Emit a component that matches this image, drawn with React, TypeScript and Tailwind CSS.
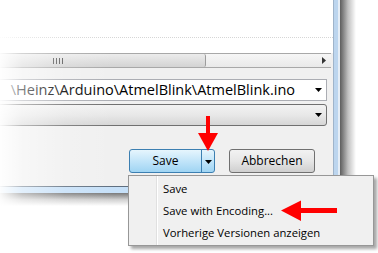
import React from 'react';

// small black combo / split-button triangle
const DownTri = () => (
  <svg width="7" height="4" viewBox="0 0 7 4">
    <path d="M0 0H7L3.5 4Z" fill="#000" />
  </svg>
);

export default function App() {
  return (
    <div className="relative w-[378px] h-[253px] overflow-hidden bg-white font-['Segoe_UI','Open_Sans',sans-serif] text-[12px] text-black">
      <div className="flex flex-col">
        <div className="flex">
          {/* dialog client area */}
          <div className="w-[333px] h-[186px] flex flex-col bg-[#f0f0f0]">
            {/* file list */}
            <div className="h-[53px] bg-white">
              <div className="h-[38px] border-b border-dotted border-[#d6d6d6]" />
            </div>

            {/* horizontal scrollbar */}
            <div className="h-[15px] mr-[2px] flex border-y border-[#a8a8a8] bg-gradient-to-b from-[#f6f6f6] to-[#e9e9e9]">
              <div className="w-[206px] flex items-center pl-[53px] rounded-r-[2px] border-r border-[#9c9c9c] bg-gradient-to-b from-[#ececec] to-[#d3d3d3]">
                <div className="flex gap-[2px]">
                  <div className="w-px h-[6px] bg-[#555]" />
                  <div className="w-px h-[6px] bg-[#555]" />
                  <div className="w-px h-[6px] bg-[#555]" />
                  <div className="w-px h-[6px] bg-[#555]" />
                </div>
              </div>
              <div className="flex-1 flex items-center justify-end pr-[5px]">
                <svg width="4" height="7" viewBox="0 0 4 7">
                  <path d="M0 0V7L4 3.5Z" fill="#333" />
                </svg>
              </div>
            </div>

            {/* file name combo */}
            <div className="mt-[11px] ml-[-4px] mr-[6px] h-[22px] flex items-center border border-[#abadb3] bg-white">
              <div className="flex-1 flex justify-end overflow-hidden pr-[16px] text-[14.5px]">
                <span className="whitespace-nowrap shrink-0">\Heinz\Arduino\AtmelBlink\AtmelBlink.ino</span>
              </div>
              <div className="w-[15px] flex justify-center pr-[1px]">
                <DownTri />
              </div>
            </div>

            {/* file type combo */}
            <div className="mt-[3px] ml-[-4px] mr-[6px] h-[22px] flex items-center justify-end rounded-[3px] border border-[#707070] bg-gradient-to-b from-[#f2f2f2] via-[#e8e8e8] to-[#d6d6d6]">
              <div className="w-[15px] flex justify-center pr-[1px]">
                <DownTri />
              </div>
            </div>

            {/* buttons */}
            <div className="mt-[23px] flex justify-end gap-[14px] mr-[18px]">
              <div className="w-[86px] h-[24px] flex rounded-[3px] border border-[#3c7fb1] bg-gradient-to-b from-[#e6f5fd] via-[#c2e5f9] to-[#9fd4f3]">
                <div className="flex-1 flex items-center justify-center border-r border-[#3c7fb1]">Save</div>
                <div className="w-[12px] flex items-center justify-center pt-[1px]">
                  <DownTri />
                </div>
              </div>
              <div className="w-[86px] h-[24px] flex items-center justify-center rounded-[3px] border border-[#707070] bg-gradient-to-b from-[#f2f2f2] via-[#e6e6e6] to-[#cfcfcf]">
                Abbrechen
              </div>
            </div>
          </div>

          {/* right window frame + shadow */}
          <div className="w-[7px] h-[193px] bg-[#bcd5ee] border-l border-[#9fb4ca] border-r-2 border-r-[#e4edf6]" />
          <div className="w-[16px] h-[193px] bg-gradient-to-r from-[#5e5e5e] via-[#c0c0c0] to-white" />
        </div>
      </div>

      {/* bottom window frame + shadow */}
      <div className="absolute left-0 top-[186px] w-[340px] flex flex-col">
        <div className="h-px bg-[#5f6f80]" />
        <div className="h-[6px] bg-[#c6e0f8]" />
        <div className="h-[13px] bg-gradient-to-b from-[#7a7a7a] via-[#d0d0d0] to-white" />
      </div>

      {/* left fade */}
      <div className="absolute inset-y-0 left-0 w-[120px] pointer-events-none bg-[linear-gradient(to_right,rgba(255,255,255,0.95)_0px,rgba(255,255,255,0.5)_22px,rgba(255,255,255,0.15)_65px,rgba(255,255,255,0)_115px)]" />

      {/* split button menu */}
      <div className="absolute left-[128px] top-[175px] w-[246px] h-[71px] flex border border-[#979797] bg-[#f0f0f0] shadow-[3px_3px_3px_rgba(0,0,0,0.35)] text-[11.3px]">
        <div className="w-[28px] border-r border-[#e0e0e0]" />
        <div className="w-px bg-white" />
        <div className="flex-1 flex flex-col pt-[2px] pl-[5px]">
          <div className="h-[22px] flex items-center">Save</div>
          <div className="h-[22px] flex items-center">Save with Encoding...</div>
          <div className="h-[22px] flex items-center">Vorherige Versionen anzeigen</div>
        </div>
      </div>

      {/* red arrows */}
      <svg className="absolute inset-0 pointer-events-none" width="378" height="253" viewBox="0 0 378 253">
        <rect x="206" y="116" width="4" height="19" fill="#ff0000" />
        <path d="M198 133H218L208 151Z" fill="#ff0000" />
        <path d="M281 210.5L301 200.5V208H337V213H301V221Z" fill="#ff0000" />
      </svg>
    </div>
  );
}
